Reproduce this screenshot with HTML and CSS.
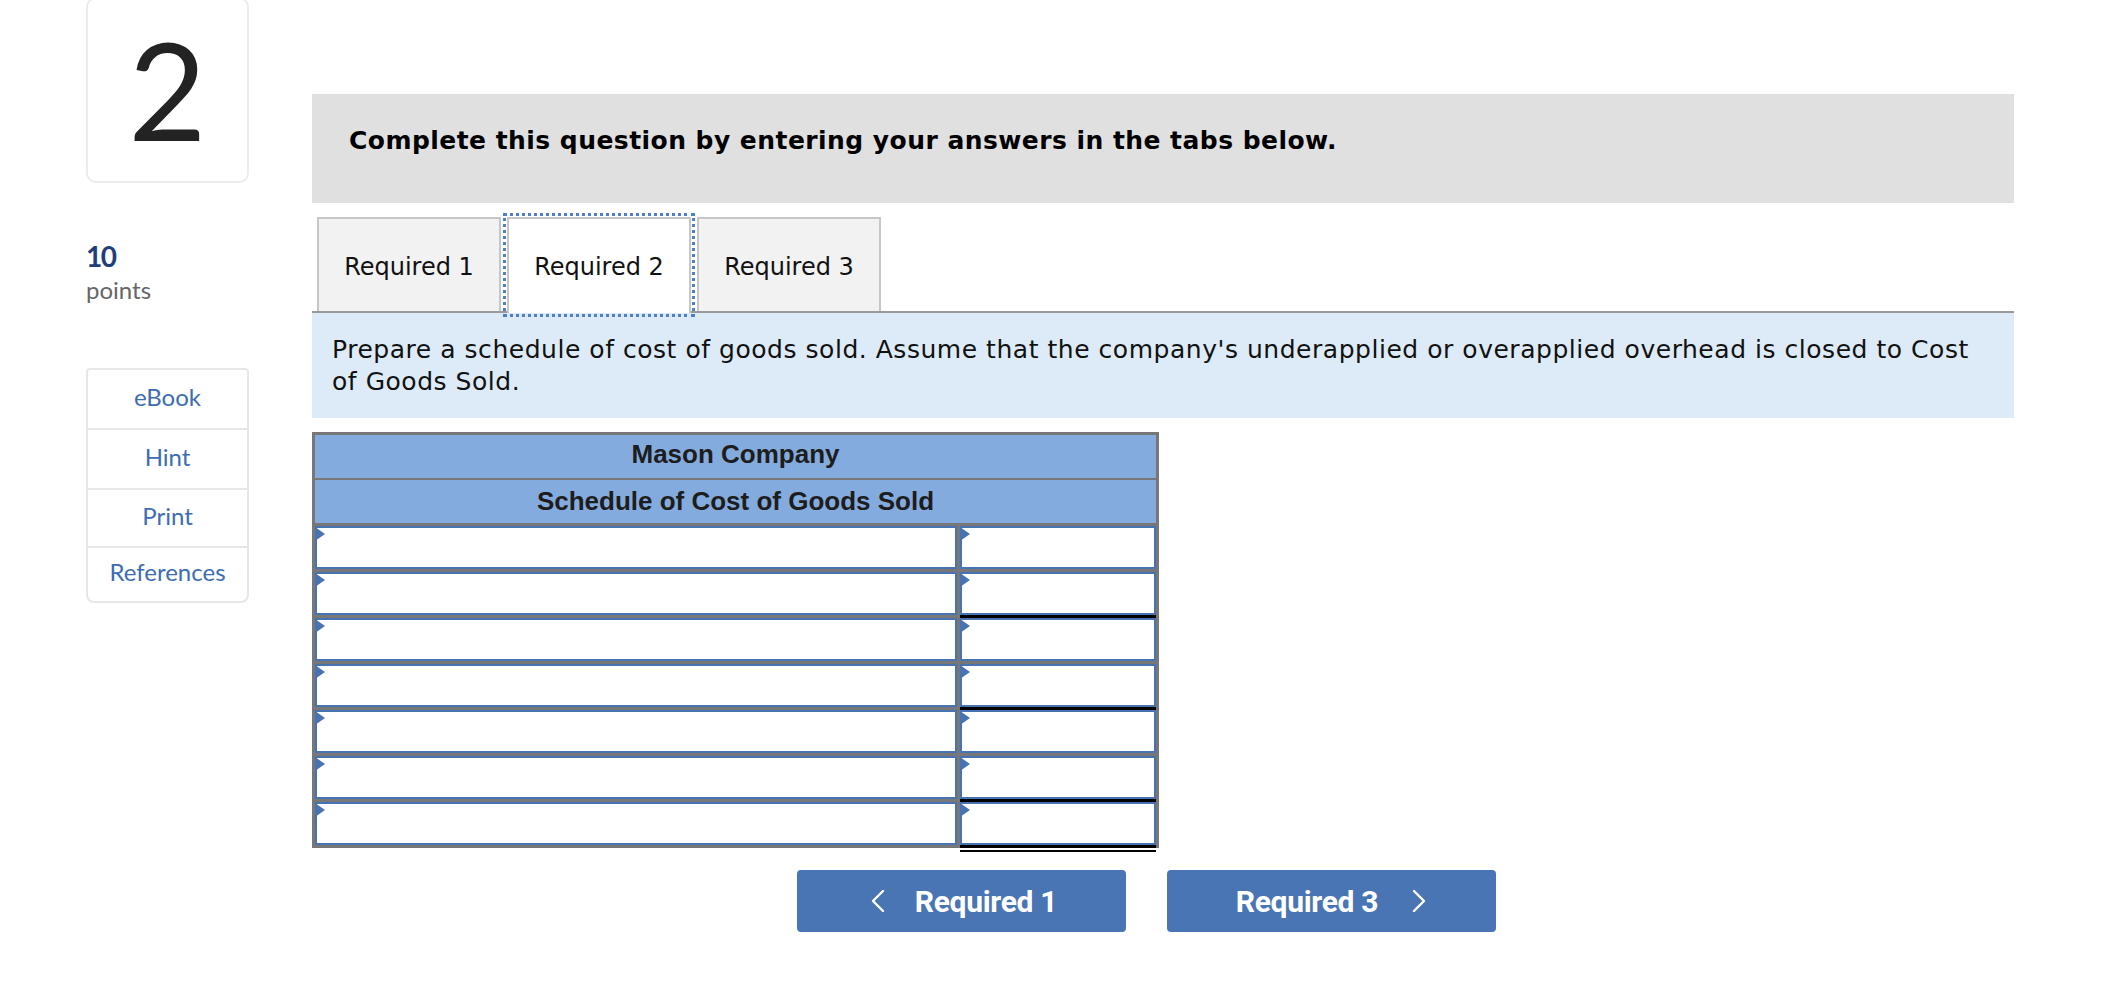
FILE: index.html
```html
<!DOCTYPE html>
<html lang="en">
<head>
<meta charset="utf-8">
<title>Question 2</title>
<link rel="stylesheet" href="styles.css">
</head>
<body>
<div class="page">
  <aside class="side">
    <div class="qnum">2</div>
    <div class="pts">
      <div class="pts-val">10</div>
      <div class="pts-lbl">points</div>
    </div>
    <nav class="links">
      <a class="link l-ebook">eBook</a>
      <a class="link l-hint">Hint</a>
      <a class="link l-print">Print</a>
      <a class="link l-refs">References</a>
    </nav>
  </aside>

  <main class="main">
    <div class="banner">Complete this question by entering your answers in the tabs below.</div>

    <div class="tabs">
      <div class="tab">Required 1</div>
      <div class="tab active">Required 2</div>
      <div class="tab">Required 3</div>
    </div>

    <div class="instr">Prepare a schedule of cost of goods sold. Assume that the company's underapplied or overapplied overhead is closed to Cost of Goods Sold.</div>

    <div class="sheet">
      <div class="hd hd-first">Mason Company</div>
      <div class="hd">Schedule of Cost of Goods Sold</div>
      <div class="rows">
        <div class="inp"></div><div class="inp"></div>
        <div class="inp"></div><div class="inp single"></div>
        <div class="inp"></div><div class="inp"></div>
        <div class="inp"></div><div class="inp single"></div>
        <div class="inp"></div><div class="inp"></div>
        <div class="inp"></div><div class="inp single"></div>
        <div class="inp"></div><div class="inp double"></div>
      </div>
    </div>

    <div class="navbtns">
      <button class="btn">
        <svg class="chev" viewBox="0 0 14 24" width="14" height="24"><polyline points="12,2 2,12 12,22" fill="none" stroke="#fff" stroke-width="2.4" stroke-linecap="round" stroke-linejoin="round"/></svg>
        <span>Required 1</span>
      </button>
      <button class="btn btn-next">
        <span>Required 3</span>
        <svg class="chev" viewBox="0 0 14 24" width="14" height="24"><polyline points="2,2 12,12 2,22" fill="none" stroke="#fff" stroke-width="2.4" stroke-linecap="round" stroke-linejoin="round"/></svg>
      </button>
    </div>
  </main>
</div>
</body>
</html>
```

FILE: styles.css
```css
* { box-sizing: border-box; }

html, body {
  margin: 0;
  padding: 0;
  background: #ffffff;
}

body {
  font-family: "DejaVu Sans", Verdana, sans-serif;
  color: #111;
  overflow: hidden;
}

.page {
  display: flex;
  align-items: flex-start;
  padding-left: 86px;
  gap: 63px;
}

/* ---------- sidebar ---------- */
.side {
  width: 163px;
  flex: 0 0 163px;
  font-family: Lato, "Open Sans", sans-serif;
}

.qnum {
  margin-top: -3px;
  height: 186px;
  border: 2px solid #ececec;
  border-radius: 10px;
  display: flex;
  align-items: center;
  justify-content: center;
  font-size: 135px;
  line-height: 1;
  color: #232323;
  padding-bottom: 2px;
}

.pts {
  margin-top: 57px;
}

.pts-val {
  font-size: 28px;
  line-height: 32px;
  font-weight: 700;
  color: #1f3f7a;
  letter-spacing: -1.5px;
}

.pts-lbl {
  font-size: 24px;
  line-height: 36px;
  color: #666;
}

.links {
  margin-top: 60px;
  display: flex;
  flex-direction: column;
  border: 2px solid #e7e7e7;
  border-radius: 4px 4px 8px 8px;
}

.link {
  display: flex;
  align-items: center;
  justify-content: center;
  font-size: 24px;
  color: #3d6db3;
  border-top: 2px solid #e7e7e7;
  padding-bottom: 6px;
}

.l-ebook { border-top: 0; height: 58px; }
.l-hint { height: 60px; }
.l-print { height: 58px; }
.l-refs { height: 55px; }

/* ---------- main ---------- */
.main {
  width: 1702px;
  flex: 0 0 1702px;
  padding-top: 94px;
}

.banner {
  height: 109px;
  background: #e0e0e0;
  padding: 32px 0 0 37px;
  font-size: 25px;
  line-height: 30px;
  font-weight: 700;
  letter-spacing: 0.45px;
  color: #000;
}

.tabs {
  margin-top: 14px;
  display: flex;
  gap: 6px;
  padding-left: 5px;
  border-bottom: 2px solid #9a9a9a;
  height: 96px;
}

.tab {
  width: 184px;
  height: 94px;
  background: #f2f2f2;
  border: 2px solid #c6c6c6;
  border-bottom: 0;
  display: flex;
  align-items: center;
  justify-content: center;
  font-size: 24px;
  color: #111;
  padding-top: 4px;
}

.tab.active {
  background: #ffffff;
  height: 96px;
  margin-bottom: -2px;
  outline: 3px dotted #4f7fc4;
  outline-offset: 1px;
  position: relative;
  z-index: 1;
  padding-top: 2px;
}

.instr {
  background: #ddebf8;
  padding: 21px 20px 20px 20px;
  font-size: 25px;
  line-height: 32px;
  letter-spacing: 0.53px;
  color: #111;
}

/* ---------- worksheet ---------- */
.sheet {
  margin-top: 14px;
  width: 847px;
  border: 3px solid #777;
  background: #777;
  display: flex;
  flex-direction: column;
  gap: 2px;
}

.hd {
  height: 43px;
  background: #84abde;
  display: flex;
  align-items: center;
  justify-content: center;
  font-family: "Liberation Sans", Arial, sans-serif;
  font-weight: 700;
  font-size: 26px;
  color: #1d1d1d;
  padding-bottom: 1px;
}

.hd-first {
  padding-bottom: 4px;
}

.rows {
  margin-top: 1px;
  display: grid;
  grid-template-columns: 642px 196px;
  grid-auto-rows: 43px;
  column-gap: 3px;
  row-gap: 3px;
}

.inp {
  position: relative;
  background: #fff;
  border: 2px solid #4873b3;
}

.inp::before {
  content: "";
  position: absolute;
  top: -1px;
  left: -2px;
  border-left: 10px solid #4873b3;
  border-top: 7px solid transparent;
  border-bottom: 7px solid transparent;
}

.inp.single {
  box-shadow: 0 3px 0 0 #000;
}

.inp.double {
  box-shadow: 0 3px 0 0 #000, 0 5px 0 0 #fff, 0 7px 0 0 #000;
}

/* ---------- nav buttons ---------- */
.navbtns {
  margin-top: 22px;
  display: flex;
  justify-content: center;
  gap: 41px;
  padding-right: 34px;
}

.btn {
  width: 329px;
  height: 62px;
  background: #4a75b4;
  border: 0;
  border-radius: 4px;
  color: #fff;
  font-family: Roboto, "Liberation Sans", sans-serif;
  font-weight: 700;
  font-size: 30px;
  display: flex;
  align-items: center;
  justify-content: center;
  gap: 30px;
  padding: 0 0 0 6px;
  letter-spacing: -0.3px;
}

.btn-next {
  gap: 34px;
  padding: 0;
}

.chev {
  display: block;
  width: 14px;
  height: 24px;
}
```
